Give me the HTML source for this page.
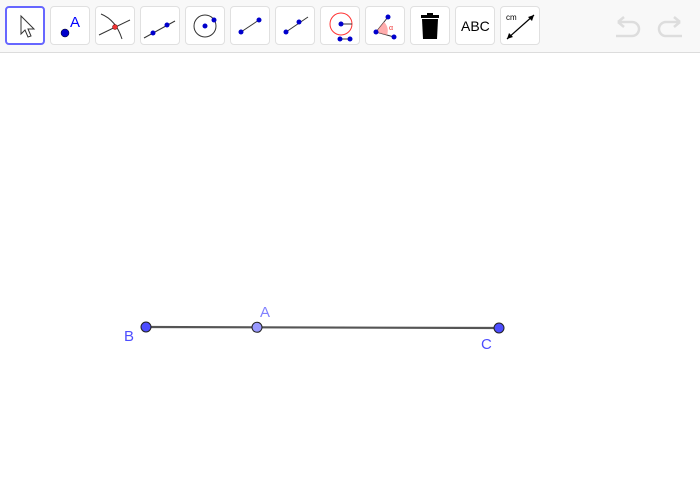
<!DOCTYPE html>
<html><head><style>
body{margin:0;width:700px;height:500px;background:#fff;font-family:"Liberation Sans",sans-serif;overflow:hidden;position:relative}
.tb{position:absolute;left:0;top:0;width:700px;height:52px;background:#f8f8f8;border-bottom:1px solid #dcdcdc}
.b{position:absolute;top:6px;width:38px;height:37px;background:#fff;border:1px solid #e0e0e0;border-radius:4px}
.b svg{position:absolute;left:0;top:0}
.sel{border:2px solid #6666ff;width:36px;height:35px}
</style></head><body>
<div class="tb">
<div class="b sel" style="left:5px"><svg width="36" height="35"><path d="M14 8 L14 26 L18 22 L21 29 L24 28 L21 21 L27 21 Z" fill="#fff" stroke="#333" stroke-width="1"/></svg></div>
<div class="b" style="left:50px"><svg width="38" height="37"><circle cx="14" cy="26" r="4" fill="#0000cc" stroke="#000" stroke-width=".5"/><text x="19" y="20" fill="#0000ff" font-size="15" font-family="Liberation Sans">A</text></svg></div>
<div class="b" style="left:95px"><svg width="38" height="37"><path d="M3 28 L34 13 M5 7 Q20 13 26 32" stroke="#333" fill="none"/><circle cx="19" cy="20" r="2.5" fill="#e33" stroke="#600" stroke-width=".5"/></svg></div>
<div class="b" style="left:140px"><svg width="38" height="37"><path d="M3 31 L34 14" stroke="#333"/><circle cx="12" cy="26" r="2.5" fill="#0000cc"/><circle cx="26" cy="18" r="2.5" fill="#0000cc"/></svg></div>
<div class="b" style="left:185px"><svg width="38" height="37"><circle cx="19" cy="19" r="11" fill="none" stroke="#333"/><circle cx="19" cy="19" r="2.5" fill="#0000cc"/><circle cx="28" cy="13" r="2.5" fill="#0000cc"/></svg></div>
<div class="b" style="left:230px"><svg width="38" height="37"><path d="M10 25 L28 13" stroke="#333"/><circle cx="10" cy="25" r="2.5" fill="#0000cc"/><circle cx="28" cy="13" r="2.5" fill="#0000cc"/></svg></div>
<div class="b" style="left:275px"><svg width="38" height="37"><path d="M10 25 L32 10" stroke="#333"/><circle cx="10" cy="25" r="2.5" fill="#0000cc"/><circle cx="23" cy="15" r="2.5" fill="#0000cc"/></svg></div>
<div class="b" style="left:320px"><svg width="38" height="37"><circle cx="20" cy="17" r="11" fill="none" stroke="#f33"/><path d="M20 17 L31 17 M19 32 L29 32" stroke="#333"/><circle cx="20" cy="17" r="2.5" fill="#0000cc"/><circle cx="19" cy="32" r="2.5" fill="#0000cc"/><circle cx="29" cy="32" r="2.5" fill="#0000cc"/></svg></div>
<div class="b" style="left:365px"><svg width="38" height="37"><path d="M10 25 L22 10 M10 25 L28 30" stroke="#333"/><path d="M10 25 L18 15 A12 12 0 0 1 21 28 Z" fill="#f99" opacity=".8"/><circle cx="10" cy="25" r="2.5" fill="#0000cc"/><circle cx="22" cy="10" r="2.5" fill="#0000cc"/><circle cx="28" cy="30" r="2.5" fill="#0000cc"/><text x="23" y="23" fill="#e33" font-size="7">α</text></svg></div>
<div class="b" style="left:410px"><svg width="38" height="37"><rect x="10" y="8" width="18" height="3" fill="#000"/><rect x="16" y="6" width="6" height="3" fill="#000"/><path d="M11 12 L27 12 L26 32 L12 32 Z" fill="#000"/></svg></div>
<div class="b" style="left:455px"><svg width="38" height="37"><text x="5" y="24" font-size="14" fill="#000" font-family="Liberation Sans">ABC</text></svg></div>
<div class="b" style="left:500px"><svg width="38" height="37"><text x="5" y="13" font-size="8" fill="#000">cm</text><path d="M6 32 L33 8" stroke="#000" stroke-width="1.2"/><path d="M6 32 L8 26 L12 30 Z M33 8 L27 10 L31 14 Z" fill="#000"/></svg></div>
<svg style="position:absolute;left:612px;top:12px" width="80" height="28"><path d="M6 10 L20 10 A7 7 0 0 1 20 24 L4 24 M6 10 L12 5 M6 10 L12 15" stroke="#ddd" stroke-width="2.5" fill="none"/><path d="M68 10 L54 10 A7 7 0 0 0 54 24 L70 24 M68 10 L62 5 M68 10 L62 15" stroke="#ddd" stroke-width="2.5" fill="none"/></svg>
</div>
<svg style="position:absolute;left:0;top:0" width="700" height="500">
<path d="M146 327 L499 328" stroke="#555" stroke-width="2.2"/>
<circle cx="146" cy="327" r="5" fill="#4d4dff" stroke="#222" stroke-width="1"/>
<circle cx="257" cy="327.3" r="5" fill="#9999ff" stroke="#222" stroke-width="1"/>
<circle cx="499" cy="328" r="5" fill="#4d4dff" stroke="#222" stroke-width="1"/>
<text x="124" y="341" fill="#4d4dff" font-size="15" font-family="Liberation Sans">B</text>
<text x="260" y="317" fill="#8080ff" font-size="15" font-family="Liberation Sans">A</text>
<text x="481" y="349" fill="#4d4dff" font-size="15" font-family="Liberation Sans">C</text>
</svg>
</body></html>
